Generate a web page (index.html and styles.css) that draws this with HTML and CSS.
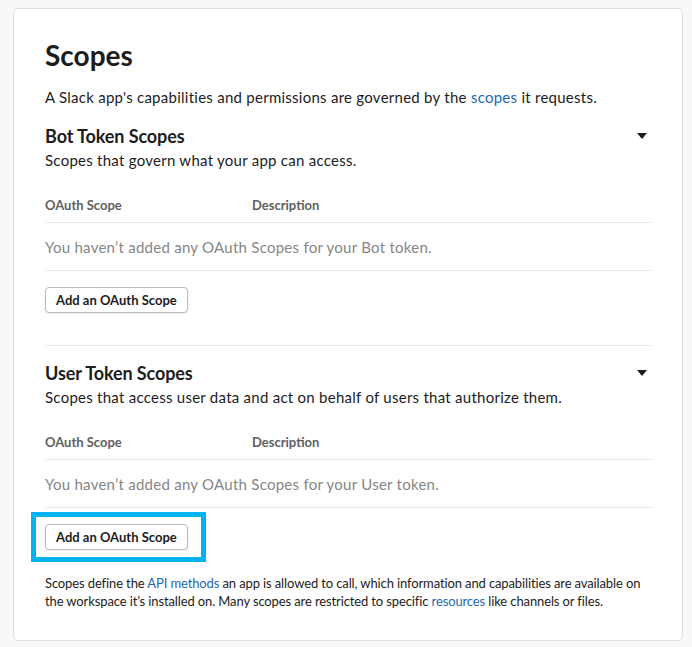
FILE: index.html
```html
<!DOCTYPE html>
<html lang="en">
<head>
<meta charset="utf-8">
<title>Scopes</title>
<link rel="stylesheet" href="styles.css">
</head>
<body>
<div class="page">
  <section class="card">
    <h1 class="title">Scopes</h1>
    <p class="lead">A Slack app's capabilities and permissions are governed by the <a class="link" href="#">scopes</a> it requests.</p>

    <div class="group">
      <div class="group-head">
        <div class="group-text">
          <h2 class="group-title">Bot Token Scopes</h2>
          <p class="group-sub">Scopes that govern what your app can access.</p>
        </div>
        <span class="caret"></span>
      </div>
      <div class="table">
        <div class="thead"><span class="col-scope">OAuth Scope</span><span>Description</span></div>
        <div class="empty">You haven’t added any OAuth Scopes for your Bot token.</div>
      </div>
      <div class="actions"><button class="btn" type="button">Add an OAuth Scope</button></div>
    </div>

    <div class="group group-user">
      <div class="group-head">
        <div class="group-text">
          <h2 class="group-title">User Token Scopes</h2>
          <p class="group-sub">Scopes that access user data and act on behalf of users that authorize them.</p>
        </div>
        <span class="caret"></span>
      </div>
      <div class="table">
        <div class="thead"><span class="col-scope">OAuth Scope</span><span>Description</span></div>
        <div class="empty">You haven’t added any OAuth Scopes for your User token.</div>
      </div>
      <div class="actions"><span class="highlight-wrap"><button class="btn" type="button">Add an OAuth Scope</button><span class="highlight"></span></span></div>
    </div>

    <p class="note">Scopes define the <a class="link" href="#">API methods</a> an app is allowed to call, which information and capabilities are available on the workspace it’s installed on. Many scopes are restricted to specific <a class="link" href="#">resources</a> like channels or files.</p>
  </section>
</div>
</body>
</html>
```

FILE: styles.css
```css
* { box-sizing: border-box; }
html, body { margin: 0; padding: 0; }
body {
  background: #f8f8f8;
  font-family: Lato, "Open Sans", "Liberation Sans", sans-serif;
  color: #1d1c1d;
}
.page {
  padding: 8px 9px 7px 13px;
}
.card {
  background: #fff;
  border: 1px solid #dddddd;
  border-radius: 5px;
  padding: 29px 30px 29px 31px;
  height: 633px;
}
.title {
  margin: 0;
  font-size: 28px;
  line-height: 34px;
  font-weight: 700;
}
.lead {
  margin: 14px 0 0;
  font-size: 15px;
  line-height: 22px;
  letter-spacing: 0.26px;
}
.link { color: #1d68b0; text-decoration: none; }
.group-head {
  display: flex;
  justify-content: space-between;
  align-items: flex-start;
}
.group { margin-top: 16px; }
.group-title {
  margin: 0;
  font-size: 18px;
  line-height: 24px;
  font-weight: 700;
  letter-spacing: -0.1px;
}
.group-sub {
  margin: 0;
  font-size: 15px;
  line-height: 24px;
  letter-spacing: 0.26px;
}
.caret {
  width: 0; height: 0;
  margin: 9px 5px 0 0;
  border-left: 5px solid transparent;
  border-right: 5px solid transparent;
  border-top: 6px solid #1d1c1d;
}
.table { margin-top: 24px; }
.thead {
  display: flex;
  font-size: 13px;
  line-height: 18px;
  font-weight: 700;
  color: #616061;
  padding-bottom: 8px;
  border-bottom: 1px solid #e8e8e8;
}
.col-scope { width: 207px; }
.empty {
  font-size: 15px;
  line-height: 22px;
  letter-spacing: 0.26px;
  color: #868686;
  padding: 13px 0 12px;
  border-bottom: 1px solid #e8e8e8;
}
.actions { padding: 16px 0 32px; }
.btn {
  font-family: inherit;
  font-size: 13px;
  font-weight: 700;
  color: #1d1c1d;
  background: #fff;
  border: 1px solid #bbbabb;
  border-radius: 4px;
  height: 26px;
  padding: 0 10px;
  line-height: 24px;
  box-shadow: 0 1px 2px rgba(0,0,0,0.08);
}
.group-user {
  border-top: 1px solid #e8e8e8;
  margin-top: 0;
  padding-top: 15px;
}
.group-user .actions { padding-bottom: 24px; }
.highlight-wrap { position: relative; display: inline-block; vertical-align: top; }
.highlight {
  position: absolute;
  left: -14px; right: -18px; top: -12px; bottom: -12px;
  border: 5px solid #00b2f0;
  pointer-events: none;
}
.note {
  margin: 0;
  font-size: 13px;
  line-height: 18px;
  letter-spacing: -0.12px;
  color: #1d1c1d;
}
```
